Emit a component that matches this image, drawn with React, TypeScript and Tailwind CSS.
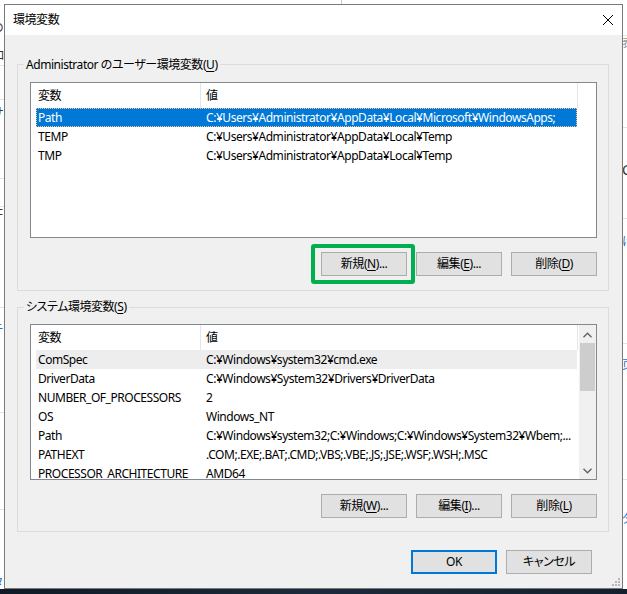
import React from "react";

type Row = [string, string];

const userVars: Row[] = [
  ["Path", "C:¥Users¥Administrator¥AppData¥Local¥Microsoft¥WindowsApps;"],
  ["TEMP", "C:¥Users¥Administrator¥AppData¥Local¥Temp"],
  ["TMP", "C:¥Users¥Administrator¥AppData¥Local¥Temp"],
];

const systemVars: Row[] = [
  ["ComSpec", "C:¥Windows¥system32¥cmd.exe"],
  ["DriverData", "C:¥Windows¥System32¥Drivers¥DriverData"],
  ["NUMBER_OF_PROCESSORS", "2"],
  ["OS", "Windows_NT"],
  ["Path", "C:¥Windows¥system32;C:¥Windows;C:¥Windows¥System32¥Wbem;..."],
  ["PATHEXT", ".COM;.EXE;.BAT;.CMD;.VBS;.VBE;.JS;.JSE;.WSF;.WSH;.MSC"],
  ["PROCESSOR_ARCHITECTURE", "AMD64"],
];

function Key({ text, k, tail = "" }: { text: string; k: string; tail?: string }) {
  return (
    <span className="whitespace-nowrap">
      {text}(<span className="underline underline-offset-[2px]">{k}</span>){tail}
    </span>
  );
}

function Button({
  children,
  primary = false,
  marked = false,
}: {
  children: React.ReactNode;
  primary?: boolean;
  marked?: boolean;
}) {
  return (
    <div
      className={
        primary
          ? "relative flex h-[24px] w-[86px] items-center justify-center border-2 border-[#0078d7] bg-[#e1e1e1]"
          : "relative flex h-[24px] w-[86px] items-center justify-center border border-[#adadad] bg-[#e1e1e1]"
      }
    >
      {children}
      {marked && (
        <span className="pointer-events-none absolute -top-[9px] -bottom-[9px] -left-[11px] -right-[9px] rounded-[3px] border-4 border-[#00b050]" />
      )}
    </div>
  );
}

function Chevron({ down = false }: { down?: boolean }) {
  return (
    <svg width="9" height="6" viewBox="0 0 9 6" className="block">
      <polyline
        points={down ? "0.5,0.8 4.5,4.8 8.5,0.8" : "0.5,5.2 4.5,1.2 8.5,5.2"}
        fill="none"
        stroke="#606060"
        strokeWidth="1.3"
      />
    </svg>
  );
}

function ListView({
  rows,
  selected,
  hovered,
  scroll = false,
}: {
  rows: Row[];
  selected?: number;
  hovered?: number;
  scroll?: boolean;
}) {
  return (
    <div className="flex h-[156px] w-[567px] overflow-hidden border border-[#828790] bg-white">
      <div className="flex w-[547px] flex-col overflow-hidden">
        <div className="flex h-[25px] shrink-0 items-center">
          <div className="flex h-full w-[170px] items-center border-r border-[#e5e5e5] pl-[7px]">変数</div>
          <div className="flex h-full w-[377px] items-center border-r border-[#e5e5e5] pl-[5px]">値</div>
        </div>
        <div className="flex flex-col pl-[5px]">
          {rows.map(([name, value], i) => {
            const cls =
              i === selected
                ? "flex h-[19px] w-[541px] shrink-0 items-center overflow-hidden bg-[#0078d7] text-white outline outline-1 outline-dotted -outline-offset-1 outline-[#f3c98b]"
                : i === hovered
                ? "flex h-[19px] w-[541px] shrink-0 items-center overflow-hidden bg-[#ededed]"
                : "flex h-[19px] w-[541px] shrink-0 items-center overflow-hidden";
            return (
              <div key={name + i} className={cls}>
                <div className="w-[165px] shrink-0 whitespace-nowrap pl-[2px] leading-[19px]">{name}</div>
                <div className="whitespace-nowrap pl-[5px] leading-[19px]">{value}</div>
              </div>
            );
          })}
        </div>
      </div>
      {scroll && (
        <div className="ml-auto flex w-[17px] flex-col bg-[#f0f0f0]">
          <div className="flex h-[17px] items-center justify-center pt-[2px]">
            <Chevron />
          </div>
          <div className="flex-1 pt-[1px]">
            <div className="mx-[1px] h-[48px] bg-[#cdcdcd]" />
          </div>
          <div className="flex h-[17px] items-center justify-center">
            <Chevron down />
          </div>
        </div>
      )}
    </div>
  );
}

function Backdrop() {
  return (
    <>
      {/* window behind the dialog */}
      <div className="absolute left-[341px] top-0 h-[6px] w-px bg-[#c8c8c8]" />
      {[65, 99, 178, 206, 307, 412, 509].map((y) => (
        <div key={"l" + y} className="absolute left-0 h-px w-[6px] bg-[#e3e3e3]" style={{ top: y }} />
      ))}
      {[35, 127, 218, 343, 479].map((y) => (
        <div key={"r" + y} className="absolute right-0 h-px w-[8px] bg-[#e3e3e3]" style={{ top: y }} />
      ))}
      <span className="absolute -left-[8px] top-[20px] text-[12px] leading-[16px] text-[#333]">の</span>
      <span className="absolute -left-[7px] top-[48px] text-[12px] leading-[16px] text-[#333]">ロ</span>
      <span className="absolute -left-[8px] top-[105px] text-[12px] leading-[16px] text-[#333]">サ</span>
      <span className="absolute -left-[8px] top-[203px] text-[12px] leading-[16px] text-[#333]">た</span>
      <span className="absolute -left-[8px] top-[322px] text-[12px] leading-[16px] text-[#2a6bd1]">テ</span>
      <span className="absolute -left-[8px] top-[575px] text-[12px] leading-[16px] text-[#2a6bd1]">タ</span>
      <span className="absolute left-[622px] top-[36px] text-[11px] leading-[14px] text-[#999]">表</span>
      <span className="absolute left-[622px] top-[162px] text-[14px] leading-[16px] text-[#333]">C</span>
      <span className="absolute left-[622px] top-[234px] text-[12px] leading-[16px] text-[#2a6bd1]">け</span>
      <span className="absolute left-[622px] top-[357px] text-[12px] leading-[16px] text-[#2a6bd1]">页</span>
      <span className="absolute left-[622px] top-[511px] text-[12px] leading-[16px] text-[#2a6bd1]">ダ</span>
      {/* taskbar */}
      <div className="absolute bottom-0 left-0 h-[5px] w-full bg-gradient-to-r from-[#0f1a26] via-[#1b2a3a] to-[#142030]" />
    </>
  );
}

export default function App() {
  return (
    <div className="relative h-[594px] w-[627px] overflow-hidden bg-white font-['Noto_Sans','Noto_Sans_CJK_JP',sans-serif] text-[12px] tracking-[-0.45px] text-black [font-feature-settings:'palt']">
      <Backdrop />
      <div className="absolute left-[4px] top-[4px] flex h-[585px] w-[619px] flex-col border border-[#7a7a7a] bg-[#f0f0f0]">
        {/* title bar */}
        <div className="flex h-[30px] shrink-0 items-center justify-between bg-white pl-[8px] pr-[9px]">
          <span className="leading-[16px]">環境変数</span>
          <svg width="10" height="10" viewBox="0 0 10 10" className="block">
            <path d="M0 0 L10 10 M10 0 L0 10" stroke="#000" strokeWidth="1" />
          </svg>
        </div>

        <div className="flex flex-col pl-[12px] pr-[13px] pt-[29px]">
          {/* user variables */}
          <div className="relative flex h-[227px] flex-col border border-[#dcdcdc] pl-[12px] pr-[11px] pt-[17px]">
            <span className="absolute -top-[8px] left-[6px] bg-[#f0f0f0] px-[2px] leading-[16px]">
              Administrator のユーザー環境変数(<span className="underline underline-offset-[2px]">U</span>)
            </span>
            <ListView rows={userVars} selected={0} />
            <div className="mt-[14px] flex justify-end gap-[9px]">
              <Button marked>
                <Key text="新規" k="N" tail="..." />
              </Button>
              <Button>
                <Key text="編集" k="E" tail="..." />
              </Button>
              <Button>
                <Key text="削除" k="D" />
              </Button>
            </div>
          </div>

          {/* system variables */}
          <div className="relative mt-[16px] flex h-[225px] flex-col border border-[#dcdcdc] pl-[12px] pr-[11px] pt-[16px]">
            <span className="absolute -top-[9px] left-[6px] bg-[#f0f0f0] px-[2px] leading-[16px]">
              システム環境変数(<span className="underline underline-offset-[2px]">S</span>)
            </span>
            <ListView rows={systemVars} hovered={0} scroll />
            <div className="mt-[14px] flex justify-end gap-[9px]">
              <Button>
                <Key text="新規" k="W" tail="..." />
              </Button>
              <Button>
                <Key text="編集" k="I" tail="..." />
              </Button>
              <Button>
                <Key text="削除" k="L" />
              </Button>
            </div>
          </div>

          {/* dialog buttons */}
          <div className="mt-[18px] flex justify-end gap-[9px] pr-[17px]">
            <Button primary>OK</Button>
            <Button>キャンセル</Button>
          </div>
        </div>

        {/* size grip */}
        <svg width="9" height="9" viewBox="0 0 9 9" className="absolute bottom-[2px] right-[2px]">
          <g fill="#b8b8b8">
            <rect x="7" y="1" width="2" height="2" />
            <rect x="4" y="4" width="2" height="2" />
            <rect x="7" y="4" width="2" height="2" />
            <rect x="1" y="7" width="2" height="2" />
            <rect x="4" y="7" width="2" height="2" />
            <rect x="7" y="7" width="2" height="2" />
          </g>
        </svg>
      </div>
    </div>
  );
}
